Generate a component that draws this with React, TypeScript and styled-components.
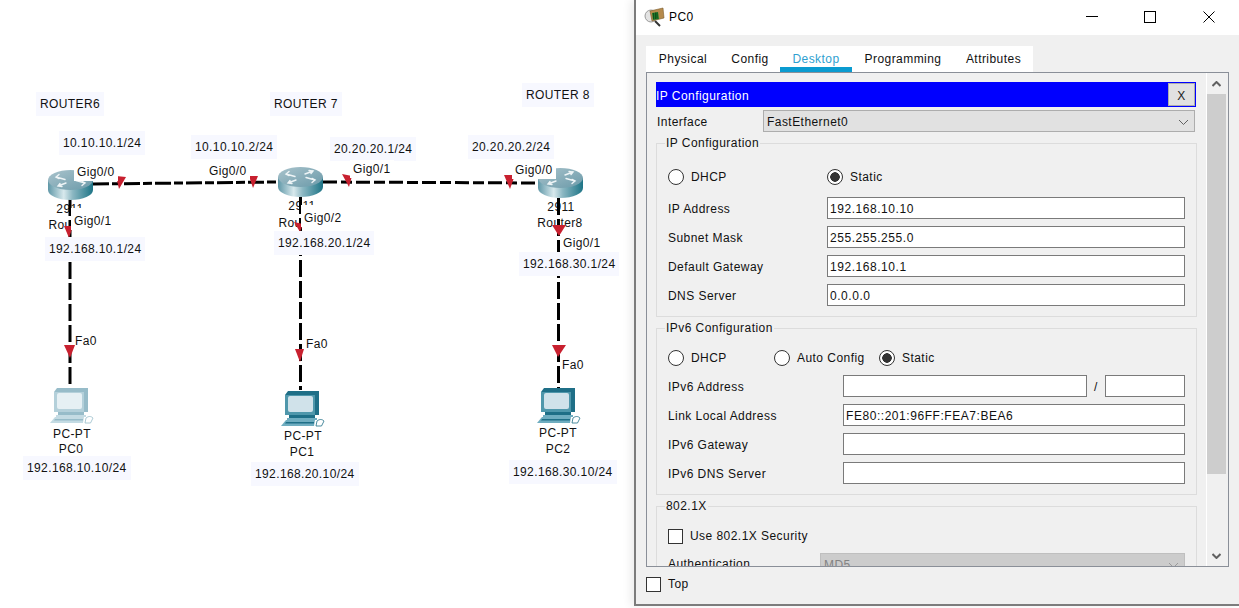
import React from "react";
import styled, { createGlobalStyle } from "styled-components";

const GlobalStyle = createGlobalStyle`
  html, body {
    margin: 0;
    padding: 0;
    background: #ffffff;
  }
  body {
    font-family: "Liberation Sans", Arial, sans-serif;
    font-size: 12px;
    letter-spacing: 0.45px;
    color: #111111;
    overflow: hidden;
  }
`;

const Page = styled.div`
  display: flex;
  width: 1239px;
  height: 608px;
  overflow: hidden;
`;

/* ---------- network diagram ---------- */

const Canvas = styled.div`
  position: relative;
  width: 634px;
  height: 608px;
  flex: none;
  letter-spacing: 0.38px;
`;

const Links = styled.svg`
  position: absolute;
  left: 0;
  top: 0;
`;

const Placed = styled.div<{ $x: number; $y: number }>`
  position: absolute;
  left: ${(p) => p.$x}px;
  top: ${(p) => p.$y}px;
  white-space: nowrap;
  line-height: 16px;
`;

const Note = styled(Placed)`
  background: #f7f8ff;
  padding: 4px;
`;

const Port = styled(Placed)<{ $top?: number }>`
  background: #ffffff;
  padding: ${(p) => p.$top ?? 1}px 3px 1px 3px;
`;

const PortPlain = styled(Placed)``;

const DeviceName = styled(Placed)`
  transform: translateX(-50%);
`;

const notes = [
  { x: 36, y: 92, t: "ROUTER6" },
  { x: 270, y: 92, t: "ROUTER 7" },
  { x: 522, y: 83, t: "ROUTER 8" },
  { x: 59, y: 131, t: "10.10.10.1/24" },
  { x: 191, y: 135, t: "10.10.10.2/24" },
  { x: 330, y: 137, t: "20.20.20.1/24" },
  { x: 468, y: 135, t: "20.20.20.2/24" },
  { x: 45, y: 237, t: "192.168.10.1/24" },
  { x: 274, y: 231, t: "192.168.20.1/24" },
  { x: 519, y: 252, t: "192.168.30.1/24" },
  { x: 23, y: 456, t: "192.168.10.10/24" },
  { x: 251, y: 462, t: "192.168.20.10/24" },
  { x: 509, y: 460, t: "192.168.30.10/24" },
];

const ports = [
  { x: 74, y: 163, t: "Gig0/0" },
  { x: 206, y: 162, t: "Gig0/0" },
  { x: 350, y: 160, t: "Gig0/1" },
  { x: 512, y: 161, t: "Gig0/0" },
  { x: 71, y: 208, t: "Gig0/1", top: 5 },
  { x: 301, y: 205, t: "Gig0/2", top: 5 },
  { x: 560, y: 234, t: "Gig0/1" },
];

const plainPorts = [
  { x: 75, y: 333, t: "Fa0" },
  { x: 306, y: 336, t: "Fa0" },
  { x: 562, y: 357, t: "Fa0" },
];

const deviceNames = [
  { x: 70, y: 201, t: "2911" },
  { x: 60, y: 217, t: "Rou" },
  { x: 302, y: 198, t: "2911" },
  { x: 290, y: 215, t: "Rou" },
  { x: 561, y: 199, t: "2911" },
  { x: 560, y: 215, t: "Router8" },
  { x: 72, y: 426, t: "PC-PT" },
  { x: 71, y: 441, t: "PC0" },
  { x: 303, y: 428, t: "PC-PT" },
  { x: 302, y: 444, t: "PC1" },
  { x: 558, y: 425, t: "PC-PT" },
  { x: 558, y: 441, t: "PC2" },
];

const arrows = [
  "116,176 126,177 119,189",
  "249,176 258,176 253,188",
  "342,174 352,176 349,187",
  "504,175 515,175 510,189",
  "64,226 73,226 69,238",
  "294,222 303,224 300,232",
  "552,225 566,225 559,236",
  "64,345 75,345 70,358",
  "295,349 304,349 300,362",
  "552,345 566,345 558,357",
];

const Router = ({ x, y }: { x: number; y: number }) => (
  <g transform={`translate(${x} ${y})`}>
    <path d="M0 10v10c0 5.500 10 10 22.500 10S45 25.500 45 20V10z" fill="url(#routerBody)" />
    <ellipse cx="22.500" cy="10" rx="22.500" ry="10" fill="url(#routerTop)" />
    <g stroke="#eef4f6" strokeWidth="1.400" fill="none" strokeLinecap="round">
      <path d="M8 7l9 2.500M11 4.500l-3 2.500 3 1.500" />
      <path d="M37 13l-9-2.500M34 15.500l3-2.500-3-1.500" />
      <path d="M27 7l8-3M31 3.500l4 .5-2 2.500" />
      <path d="M18 13l-8 3M14 16.500l-4-.5 2-2.500" />
    </g>
  </g>
);

const Computer = ({ x, y, faded }: { x: number; y: number; faded?: boolean }) => {
  const front = faded ? "#b4d0da" : "#4f97ab";
  const side = faded ? "#97bcc9" : "#1f6f87";
  const screen = faded ? "#e6f0f4" : "#d0e2ea";
  const slab = faded ? "#c4dbe3" : "#6fadc0";
  return (
    <g transform={`translate(${x} ${y})`}>
      <path d="M4 4l3-4h31v24H4z" fill={side} />
      <path d="M4 4h30v20H4z" fill={front} />
      <rect x="7" y="5" width="25" height="16" rx="2" fill={screen} />
      <path d="M8 24h26v3H8z" fill={side} />
      <path d="M6 27h30v2H6z" fill={slab} />
      <path d="M0 35l5-6h29l-1 6z" fill={slab} />
      <path d="M5 31h28v1.500H4z" fill={side} />
      <path d="M36 30c2.500-2 5-2 7 0l-2.500 5H35z" fill="#ffffff" stroke={side} strokeWidth="0.800" />
    </g>
  );
};

const Diagram = () => (
  <Canvas>
    {deviceNames.map((d) => (
      <DeviceName key={`${d.x}-${d.y}`} $x={d.x} $y={d.y}>
        {d.t}
      </DeviceName>
    ))}
    <Links width="634" height="608" viewBox="0 0 634 608">
      <defs>
        <linearGradient id="routerBody" x1="0" x2="1" y1="0" y2="0">
          <stop offset="0" stopColor="#5f97a7" />
          <stop offset="0.35" stopColor="#d8e9ed" />
          <stop offset="0.55" stopColor="#8bb7c2" />
          <stop offset="1" stopColor="#1d7486" />
        </linearGradient>
        <linearGradient id="routerTop" x1="0" x2="1" y1="0" y2="1">
          <stop offset="0" stopColor="#a9c3cc" />
          <stop offset="1" stopColor="#6b9aa9" />
        </linearGradient>
      </defs>
      <g stroke="#000000" strokeWidth="3" fill="none">
        <path d="M93 184L278 182" strokeDasharray="16 3 9 3" />
        <path d="M323 182L538 183" strokeDasharray="14 4 11 4" />
        <path d="M70 199V388" strokeDasharray="17 4" />
        <path d="M300.500 197V390" strokeDasharray="17 4" />
        <path d="M558.500 198V388" strokeDasharray="17 4" />
      </g>
      <Router x={48} y={170} />
      <Router x={278} y={167} />
      <Router x={538} y={168} />
      <Computer x={50} y={388} faded />
      <Computer x={281} y={391} />
      <Computer x={537} y={388} />
      {arrows.map((a) => (
        <polygon key={a} points={a} fill="#c8202f" />
      ))}
    </Links>
    {notes.map((n) => (
      <Note key={n.t} $x={n.x} $y={n.y}>
        {n.t}
      </Note>
    ))}
    {ports.map((p) => (
      <Port key={`${p.x}-${p.y}`} $x={p.x} $y={p.y} $top={p.top}>
        {p.t}
      </Port>
    ))}
    {plainPorts.map((p) => (
      <PortPlain key={p.x} $x={p.x} $y={p.y}>
        {p.t}
      </PortPlain>
    ))}
  </Canvas>
);

/* ---------- PC0 window ---------- */

const Window = styled.div`
  width: 605px;
  height: 606px;
  flex: none;
  box-sizing: border-box;
  display: flex;
  flex-direction: column;
  background: #f0f0f0;
  border-left: 2px solid #7c7c7c;
  border-bottom: 2px solid #7c7c7c;
  box-shadow: -4px 0 8px rgba(0, 0, 0, 0.07);
`;

const TitleBar = styled.div`
  height: 35px;
  flex: none;
  box-sizing: border-box;
  display: flex;
  align-items: center;
  background: #ffffff;
  padding: 0 1px 2px 8px;
`;

const WindowTitle = styled.span`
  margin-left: 4px;
  font-size: 12px;
  color: #000000;
`;

const WindowButtons = styled.div`
  margin-left: auto;
  display: flex;
`;

const WindowButton = styled.div`
  width: 58.500px;
  height: 33px;
  display: flex;
  align-items: center;
  justify-content: center;
`;

const TitleIcon = () => (
  <svg width="21" height="21" viewBox="0 0 21 21">
    <circle cx="7" cy="10" r="6" fill="#e3e3e3" stroke="#9a9a9a" />
    <path d="M11 15l5 5" stroke="#333333" strokeWidth="2" />
    <path d="M6 5l13-3 1 10-12 3z" fill="#b58a4c" stroke="#7a5a2a" strokeWidth="0.600" />
    <path d="M8 7l6-1 1 7-6 1z" fill="#1c7a2a" />
    <path d="M9.500 7v6M11.500 6.500v6.500M13 6.500v6" stroke="#0a3d12" strokeWidth="0.700" />
  </svg>
);

const Body = styled.div`
  flex: 1;
  min-height: 0;
  display: flex;
  flex-direction: column;
  padding: 11px 10px 0 10px;
`;

const TabStrip = styled.div`
  height: 26px;
  width: 387px;
  flex: none;
  background: #ffffff;
  display: flex;
`;

const Tab = styled.div<{ $w: number; $active?: boolean }>`
  width: ${(p) => p.$w}px;
  box-sizing: border-box;
  padding-top: 6px;
  text-align: center;
  color: ${(p) => (p.$active ? "#2f9fd0" : "#111111")};
  border-bottom: 5px solid ${(p) => (p.$active ? "#0a9bd0" : "transparent")};
`;

const Panel = styled.div`
  height: 495px;
  flex: none;
  box-sizing: border-box;
  display: flex;
  border: 1px solid #8a8f98;
  overflow: hidden;
`;

const Content = styled.div`
  width: 559px;
  flex: none;
  box-sizing: border-box;
  padding: 9px 10px 0 9px;
`;

const BlueBar = styled.div`
  height: 25px;
  box-sizing: border-box;
  background: #0000ff;
  color: #ffffff;
  display: flex;
  align-items: center;
  justify-content: space-between;
  padding-right: 1px;
`;

const BarTitle = styled.span`
  padding-top: 2px;
`;

const CloseBox = styled.div`
  width: 27px;
  height: 23px;
  box-sizing: border-box;
  background: #e1e1e1;
  border: 1px solid #adadad;
  color: #222222;
  padding-top: 2px;
  display: flex;
  align-items: center;
  justify-content: center;
`;

const InterfaceRow = styled.div`
  display: flex;
  align-items: center;
  height: 22px;
  margin-top: 3px;
`;

const InterfaceLabel = styled.div`
  width: 107px;
  padding: 2px 0 0 1px;
  box-sizing: border-box;
`;

const Select = styled.div<{ $disabled?: boolean; $w: number }>`
  width: ${(p) => p.$w}px;
  height: 22px;
  flex: none;
  box-sizing: border-box;
  display: flex;
  align-items: center;
  justify-content: space-between;
  padding: 2px 5px 0 3px;
  background: ${(p) => (p.$disabled ? "#cccccc" : "#e1e1e1")};
  border: 1px solid ${(p) => (p.$disabled ? "#bfbfbf" : "#adadad")};
  color: ${(p) => (p.$disabled ? "#838383" : "#111111")};
`;

const Group = styled.div<{ $pad: number }>`
  position: relative;
  margin-top: 11px;
  width: 541px;
  box-sizing: border-box;
  border: 1px solid #dcdcdc;
  padding: ${(p) => p.$pad}px 11px 10px 11px;
`;

const Legend = styled.div`
  position: absolute;
  top: -8px;
  left: 8px;
  padding: 0 1px;
  line-height: 15px;
  background: #f0f0f0;
`;

const RadioRow = styled.div`
  display: flex;
  align-items: center;
  height: 18px;
`;

const RadioItem = styled.label<{ $w: number }>`
  width: ${(p) => p.$w}px;
  display: flex;
  align-items: center;
  gap: 7px;
`;

const RadioDot = styled.span<{ $on?: boolean }>`
  width: 16px;
  height: 16px;
  flex: none;
  box-sizing: border-box;
  border-radius: 50%;
  border: 1px solid #333333;
  background: ${(p) => (p.$on ? "radial-gradient(circle, #333333 0 4.500px, #ffffff 5px)" : "#ffffff")};
`;

const Fields = styled.div<{ $top: number }>`
  display: flex;
  flex-direction: column;
  gap: 7px;
  margin-top: ${(p) => p.$top}px;
`;

const FieldRow = styled.div<{ $label: number }>`
  display: grid;
  grid-template-columns: ${(p) => p.$label}px 1fr;
  align-items: center;
  height: 22px;
`;

const RowLabel = styled.span`
  padding-top: 2px;
`;

const Field = styled.div`
  height: 22px;
  box-sizing: border-box;
  background: #ffffff;
  border: 1px solid #7a7a7a;
  padding: 0 2px;
  line-height: 22px;
  letter-spacing: 0.55px;
`;

const AddressField = styled.div`
  display: grid;
  grid-template-columns: 244px 18px 80px;
  align-items: center;
  text-align: center;
`;

const CheckRow = styled.label`
  display: flex;
  align-items: center;
  gap: 7px;
  height: 16px;
`;

const CheckBox = styled.span`
  width: 15px;
  height: 15px;
  flex: none;
  box-sizing: border-box;
  background: #ffffff;
  border: 1px solid #333333;
`;

const AuthRow = styled.div`
  display: flex;
  align-items: center;
  height: 22px;
  margin-top: 9px;
`;

const AuthLabel = styled.div`
  width: 152px;
`;

const Scrollbar = styled.div`
  width: 19px;
  flex: none;
  display: flex;
  flex-direction: column;
  border-left: 1px solid #ffffff;
  background: #f0f0f0;
`;

const ScrollButton = styled.div`
  height: 21px;
  flex: none;
  display: flex;
  align-items: center;
  justify-content: center;
`;

const ScrollThumb = styled.div`
  height: 380px;
  flex: none;
  background: #cdcdcd;
`;

const ScrollTrack = styled.div`
  flex: 1;
`;

const Footer = styled.div`
  margin-top: 9px;
`;

const Chevron = ({ color = "#606060" }: { color?: string }) => (
  <svg width="11" height="7" viewBox="0 0 11 7">
    <path d="M1 1l4.500 4.500L10 1" fill="none" stroke={color} strokeWidth="1" />
  </svg>
);

const ScrollArrow = ({ up }: { up?: boolean }) => (
  <svg width="9" height="6" viewBox="0 0 9 6">
    <path d={up ? "M0.500 5l4-4 4 4" : "M0.500 1l4 4 4-4"} fill="none" stroke="#606060" strokeWidth="2" />
  </svg>
);

const ipv4Rows = [
  ["IP Address", "192.168.10.10"],
  ["Subnet Mask", "255.255.255.0"],
  ["Default Gateway", "192.168.10.1"],
  ["DNS Server", "0.0.0.0"],
];

const ipv6Rows = [
  ["Link Local Address", "FE80::201:96FF:FEA7:BEA6"],
  ["IPv6 Gateway", ""],
  ["IPv6 DNS Server", ""],
];

const tabs = [
  { t: "Physical", w: 74 },
  { t: "Config", w: 60 },
  { t: "Desktop", w: 72, active: true },
  { t: "Programming", w: 102 },
  { t: "Attributes", w: 79 },
];

const PcWindow = () => (
  <Window>
    <TitleBar>
      <TitleIcon />
      <WindowTitle>PC0</WindowTitle>
      <WindowButtons>
        <WindowButton>
          <svg width="12" height="12" viewBox="0 0 12 12">
            <path d="M0 5.500h12" stroke="#000000" />
          </svg>
        </WindowButton>
        <WindowButton>
          <svg width="12" height="12" viewBox="0 0 12 12">
            <rect x="0.500" y="0.500" width="11" height="11" fill="none" stroke="#000000" />
          </svg>
        </WindowButton>
        <WindowButton>
          <svg width="12" height="12" viewBox="0 0 12 12">
            <path d="M0.500 0.500l11 11M11.500 0.500l-11 11" stroke="#000000" />
          </svg>
        </WindowButton>
      </WindowButtons>
    </TitleBar>
    <Body>
      <TabStrip>
        {tabs.map((t) => (
          <Tab key={t.t} $w={t.w} $active={t.active}>
            {t.t}
          </Tab>
        ))}
      </TabStrip>
      <Panel>
        <Content>
          <BlueBar>
            <BarTitle>IP Configuration</BarTitle>
            <CloseBox>X</CloseBox>
          </BlueBar>
          <InterfaceRow>
            <InterfaceLabel>Interface</InterfaceLabel>
            <Select $w={432}>
              FastEthernet0
              <Chevron />
            </Select>
          </InterfaceRow>

          <Group $pad={24}>
            <Legend>IP Configuration</Legend>
            <RadioRow>
              <RadioItem $w={159}>
                <RadioDot />
                DHCP
              </RadioItem>
              <RadioItem $w={100}>
                <RadioDot $on />
                Static
              </RadioItem>
            </RadioRow>
            <Fields $top={11}>
              {ipv4Rows.map(([label, value]) => (
                <FieldRow key={label} $label={159}>
                  <RowLabel>{label}</RowLabel>
                  <Field>{value}</Field>
                </FieldRow>
              ))}
            </Fields>
          </Group>

          <Group $pad={20}>
            <Legend>IPv6 Configuration</Legend>
            <RadioRow>
              <RadioItem $w={106}>
                <RadioDot />
                DHCP
              </RadioItem>
              <RadioItem $w={105}>
                <RadioDot />
                Auto Config
              </RadioItem>
              <RadioItem $w={100}>
                <RadioDot $on />
                Static
              </RadioItem>
            </RadioRow>
            <Fields $top={8}>
              <FieldRow $label={175}>
                <RowLabel>IPv6 Address</RowLabel>
                <AddressField>
                  <Field />
                  <RowLabel>/</RowLabel>
                  <Field />
                </AddressField>
              </FieldRow>
              {ipv6Rows.map(([label, value]) => (
                <FieldRow key={label} $label={175}>
                  <RowLabel>{label}</RowLabel>
                  <Field>{value}</Field>
                </FieldRow>
              ))}
            </Fields>
          </Group>

          <Group $pad={21}>
            <Legend>802.1X</Legend>
            <CheckRow>
              <CheckBox />
              Use 802.1X Security
            </CheckRow>
            <AuthRow>
              <AuthLabel>Authentication</AuthLabel>
              <Select $w={365} $disabled>
                MD5
                <Chevron color="#9a9a9a" />
              </Select>
            </AuthRow>
          </Group>
        </Content>
        <Scrollbar>
          <ScrollButton>
            <ScrollArrow up />
          </ScrollButton>
          <ScrollThumb />
          <ScrollTrack />
          <ScrollButton>
            <ScrollArrow />
          </ScrollButton>
        </Scrollbar>
      </Panel>
      <Footer>
        <CheckRow>
          <CheckBox />
          Top
        </CheckRow>
      </Footer>
    </Body>
  </Window>
);

export default function App() {
  return (
    <>
      <GlobalStyle />
      <Page>
        <Diagram />
        <PcWindow />
      </Page>
    </>
  );
}
